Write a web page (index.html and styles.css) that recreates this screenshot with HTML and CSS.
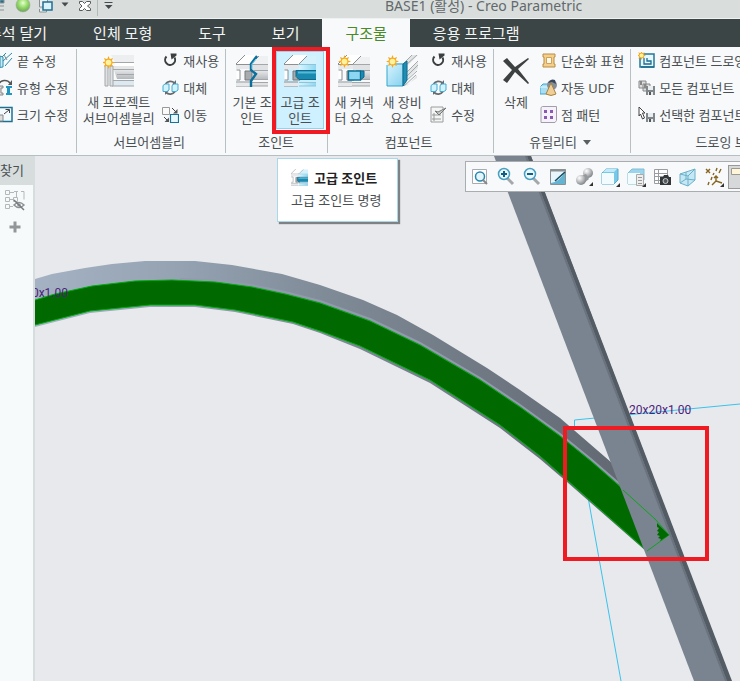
FILE: index.html
```html
<!DOCTYPE html>
<html lang="ko">
<head>
  <meta charset="UTF-8">
  <meta name="viewport" content="width=device-width, initial-scale=1.0">
  <title>BASE1 (활성) - Creo Parametric</title>
  <link rel="stylesheet" href="styles.css">
</head>
<body>
  <!-- Shared icons -->
  <svg class="defs" width="0" height="0" aria-hidden="true">
    <defs>
      <linearGradient id="g-steel" x1="0" y1="0" x2="0" y2="1">
        <stop offset="0" stop-color="#e4e6e8"/><stop offset="1" stop-color="#b4b7ba"/>
      </linearGradient>
      <linearGradient id="g-blue" x1="0" y1="0" x2="1" y2="1">
        <stop offset="0" stop-color="#d9f5ff"/><stop offset="1" stop-color="#7fcdec"/>
      </linearGradient>
      <linearGradient id="g-adv" x1="0" y1="0" x2="1" y2="0">
        <stop offset="0" stop-color="#d9f5ff"/><stop offset="1" stop-color="#8fd6f0"/>
      </linearGradient>
      <radialGradient id="g-ball" cx="0.5" cy="0.35" r="0.6">
        <stop offset="0" stop-color="#e6ffd0"/><stop offset="0.6" stop-color="#8ed860"/><stop offset="1" stop-color="#74a860"/>
      </radialGradient>
      <radialGradient id="g-grey" cx="0.35" cy="0.3" r="0.7">
        <stop offset="0" stop-color="#ffffff"/><stop offset="1" stop-color="#84888b"/>
      </radialGradient>
      <linearGradient id="g-arc" gradientUnits="userSpaceOnUse" x1="35" y1="0" x2="615" y2="0">
        <stop offset="0" stop-color="#a5b2c3"/><stop offset="0.25" stop-color="#95a2b2"/>
        <stop offset="0.5" stop-color="#7f8b97"/><stop offset="1" stop-color="#626973"/>
      </linearGradient>
    </defs>
    <symbol id="star" viewBox="0 0 12 12">
      <path d="M6 0l1.200 3.100 3-1.300-1.300 3L12 6l-3.100 1.200 1.300 3-3-1.300L6 12 4.800 8.900l-3 1.300 1.300-3L0 6l3.100-1.200-1.300-3 3 1.300z" fill="#f7a81b"/>
      <circle cx="6" cy="6" r="2.600" fill="#fff3a0"/>
    </symbol>
    <symbol id="beam-end" viewBox="0 0 32 32">
      <path d="M0 9L9 0H23L15 9z" fill="#fff"/>
      <path d="M0 9L9 0M15 9L23 1M0 9.500H15M0 27H14M0 31H14" stroke="#8c9093" fill="none"/>
      <path d="M0 10h15v4H0zM0 28h14v3H0z" fill="#e6e8e9"/>
      <path d="M0.500 15H4v10H0.500" fill="#fff" stroke="#8c9093"/>
      <path d="M9 16h7v9H9z" fill="#a8abad" stroke="#77797b"/>
    </symbol>
    <symbol id="i-sub" viewBox="0 0 32 32">
      <path d="M8 0h23v7H12z" fill="#eceeef"/><path d="M12 7h19v4H12z" fill="#fff"/>
      <path d="M7 11h24v3H7z" fill="#e4e6e7"/><path d="M11 15h20v9H14z" fill="url(#g-steel)"/>
      <path d="M7 26h24v5H7z" fill="#dce9f0"/>
      <path d="M10 7.500H31M9 14.500h22M14 19.500h17M9 25.500h22M9 31h22" stroke="#a4a7a9"/>
      <path d="M2 10h3v21H2zM7 11h3v20H7z" fill="#dfe1e2" stroke="#a4a7a9"/>
      <use href="#star" x="-1" y="1" width="13" height="13"/>
    </symbol>
    <symbol id="i-joint" viewBox="0 0 32 32">
      <path d="M22 1h10v8H15z" fill="#eef0f1"/><path d="M17 10h15v5H17z" fill="#dfe1e2"/>
      <path d="M17 16h15v9H17z" fill="url(#g-steel)"/><path d="M16 28h16v3H16z" fill="#e0e2e3"/>
      <path d="M16 9.500h16M18 15.500h14M18 24.500h14M16 27.500h16M16 31h16" stroke="#a4a7a9"/>
      <use href="#beam-end" width="32" height="32"/>
      <path d="M21 1l-6 8v6l5 4-5 7v6" fill="none" stroke="#0a6f9b" stroke-width="2.400"/>
      <path d="M20 4l-4 5v5" fill="none" stroke="#7dd0ee"/>
    </symbol>
    <symbol id="i-adv" viewBox="0 0 32 32">
      <path d="M22 1h10v9H15z" fill="#d5f1fb"/><path d="M15 10h17v5H15zM15 27h17v4H15z" fill="url(#g-adv)"/>
      <path d="M15 25h17v2H15z" fill="#c8ecf8"/>
      <use href="#beam-end" width="32" height="32"/>
      <path d="M14 9.500h18M15 27.500h17M15 31h17" stroke="#8cc5d9"/>
      <path d="M12 16h20v8H14l-2-3z" fill="#1989b0"/><path d="M14 17.500h18" stroke="#55b9d8" stroke-width="2"/>
      <path d="M32 15.500H12v6l3 3h17" fill="none" stroke="#11688a"/>
    </symbol>
    <symbol id="i-conn" viewBox="0 0 32 32">
      <path d="M18 2h14v7H15z" fill="#eef0f1"/><path d="M15 10h17v5H15z" fill="#dfe1e2"/>
      <path d="M15 16h17v9H15z" fill="url(#g-steel)"/><path d="M14 28h18v3H14z" fill="#e0e2e3"/>
      <path d="M14 9.500h18M18 15.500h14M18 24.500h14M14 27.500h18M14 31h18" stroke="#a4a7a9"/>
      <use href="#beam-end" width="32" height="32"/>
      <path d="M10.500 16h12v9h-12z" fill="#8ed7f3" stroke="#0d7399" stroke-width="1.400"/>
      <path d="M22.500 25V16H26v6z" fill="#168bb5" stroke="#0d6688"/>
      <use href="#star" x="0" y="0" width="13" height="13"/>
    </symbol>
    <symbol id="i-equip" viewBox="0 0 32 32">
      <path d="M17 9L26 0h6L22 10v6l10-9v6L21 24v7l10-11v3L19 31h-2z" fill="#e2e5e6"/>
      <path d="M17 9L26 0M20 10L31 0M21 17L32 6M21 21L32 10M20 26l11-10M18 31l12-11" stroke="#a4a9ac" fill="none"/>
      <path d="M4 8h14l3 2v13l-4 8H1V8z" fill="url(#g-blue)"/>
      <path d="M1 10v21h16V9H9" fill="none" stroke="#35a6cb"/><path d="M17 9l4-3v19l-4 6z" fill="#208db4" stroke="#0e6c8e"/>
      <use href="#star" x="0" y="0" width="13" height="13"/>
    </symbol>
    <symbol id="i-delete" viewBox="0 0 32 32">
      <path d="M3 6l4-3 8 9L28 3l1 1-11 10 11 14-1 1-13-12L7 28l-4-3 9-10z" fill="#3e4141"/>
    </symbol>
    <symbol id="i-reuse" viewBox="0 0 17 17">
      <path d="M4.500 4.500A5 5 0 1 0 12.500 5.500" fill="none" stroke="#3b3f40" stroke-width="2"/>
      <path d="M8.500 1.500H14.500v2L9.500 7.500z" fill="#3b3f40"/>
    </symbol>
    <symbol id="i-replace" viewBox="0 0 17 17">
      <path d="M3.500 5a6 6 0 0 1 9-1M13 12.500a6 6 0 0 1-9 1" fill="none" stroke="#666b6d" stroke-width="1.700"/>
      <path d="M14 1v4.500H10zM3 16v-4.500h4z" fill="#666b6d"/>
      <path d="M1 6.500l2-1.500h4v6L5 12.500H1zM10 6.500L12 5h4v6l-2 1.500h-4z" fill="#d2f2fd" stroke="#45abd0"/>
    </symbol>
    <symbol id="i-move" viewBox="0 0 17 17">
      <path d="M.500 1.500h7v7h-7z" fill="#fafafa" stroke="#999"/><path d="M8.500 8.500h8v8h-8z" fill="#e8f8fd" stroke="#187394" stroke-width="1.200"/>
      <path d="M10 2l4 4M2 11l4 4" fill="none" stroke="#444"/><path d="M15.500 3v4.500H11zM7 11.500V16H2.500z" fill="#555"/>
    </symbol>
    <symbol id="i-edit" viewBox="0 0 17 17">
      <path d="M1 1h12v15H1z" fill="#f4f5f5" stroke="#9a9d9e"/>
      <path d="M3 8h2v2H3zM3 12h2v2H3zM6 9h5M6 13h5" stroke="#999" fill="none"/>
      <path d="M5 5l3 1 8-4-7 7z" fill="#c8cbcc" stroke="#777"/>
    </symbol>
    <symbol id="i-end" viewBox="0 0 17 17">
      <path d="M0 3l7 2v10l-7 1z" fill="#c5ebf7" stroke="#2c8cac"/><path d="M4 4v11M7 9l9-8M9 14l7-8M6 5l4-4" stroke="#2c8cac" fill="none"/><path d="M8 3l3 5" stroke="#8b8f91"/>
    </symbol>
    <symbol id="i-type" viewBox="0 0 17 17">
      <path d="M3 5a6 5 0 0 1 11-1" fill="none" stroke="#555" stroke-width="1.500"/><path d="M16 1v5h-4z" fill="#555"/>
      <path d="M1 7h6v2H5v5h2v2H1v-2h1V9H1z" fill="#ddd" stroke="#888"/><path d="M10 7h6v2h-2v5h2v2h-6v-2h1V9h-1z" fill="#2197c0"/>
    </symbol>
    <symbol id="i-size" viewBox="0 0 17 17">
      <path d="M1 1.500h15v14H1z" fill="#f3fbfe" stroke="#1b7192" stroke-width="1.500"/><path d="M1 9h6v6H1z" fill="#ddd" stroke="#888"/><path d="M8 8l5-4M9.500 3.500H13.500V7" stroke="#444" fill="none"/>
    </symbol>
    <symbol id="i-simple" viewBox="0 0 17 17">
      <path d="M3 2h12v3h-1v7h1v3H3v-3h1V5H3z" fill="#f5cf8a" stroke="#b98d45"/><path d="M6.500 5.500h5v6h-5z" fill="#fff8e8" stroke="#c9a25f"/>
    </symbol>
    <symbol id="i-udf" viewBox="0 0 17 17">
      <path d="M0 8l3-3h8v8l-3 2H0z" fill="#a8def4" stroke="#3fa5ca"/><path d="M0 8h8l3-3" fill="none" stroke="#e6faff"/>
      <circle cx="12" cy="6" r="5" fill="#858e99"/><path d="M8 4q3-5 7-3l1 4-4-2z" fill="#3a4758"/>
      <path d="M11 4l5 11q-5 3-10 0z" fill="#efcf97" stroke="#a98341"/>
    </symbol>
    <symbol id="i-points" viewBox="0 0 17 17">
      <path d="M1 1.500L2.500 0.500h14v14L15 16.500H1z" fill="#f5f2fa" stroke="#a49cac"/>
      <path d="M4 4h3v3H4zM10 4h3v3h-3zM4 10h3v3H4zM10 10h3v3h-3z" fill="#8a5ab2"/>
    </symbol>
    <symbol id="i-drawing" viewBox="0 0 17 17">
      <path d="M2 2h14v13H2z" fill="#e6f7fd" stroke="#247896" stroke-width="1.500"/><path d="M6 6v6h7V9H9V6M3 15h13" fill="none" stroke="#1b6e8e" stroke-width="1.300"/>
      <use href="#star" x="-1" y="-1" width="9" height="9"/>
    </symbol>
    <symbol id="i-saveall" viewBox="0 0 17 17">
      <path d="M1 2h7v7H1zM5 5h7v7H5z" fill="#ddd" stroke="#888"/><path d="M2 2h2v4H2zM6 5h2v4H6z" fill="#888"/>
      <path d="M8 7h9v9H8z" fill="#81868a"/><path d="M10 7h5v4h-5zM10 13h5v3h-5z" fill="#e9eff1"/><path d="M11 13h2v3h-2z" fill="#555"/>
    </symbol>
    <symbol id="i-savesel" viewBox="0 0 17 17">
      <path d="M1 1l6 6H4.500l2 5-2 1-2-5L1 10z" fill="#fff" stroke="#444"/>
      <path d="M8 7h9v9H8z" fill="#81868a"/><path d="M10 7h5v4h-5zM10 13h5v3h-5z" fill="#e9eff1"/><path d="M11 13h2v3h-2z" fill="#555"/>
    </symbol>
  </svg>

  <!-- Title bar -->
  <header class="titlebar">
    <div class="quick">
      <svg width="114" height="19" viewBox="0 0 114 19">
        <path d="M0 0h4v3H0zM0 6h4M0 10h4" fill="#1f6f92" stroke="#8a9194"/>
        <circle cx="23" cy="5" r="7" fill="url(#g-ball)" stroke="#9cae98" stroke-width=".600"/>
        <path d="M39.500-1h8v8h-8zM39.500 9v3h7V9" fill="#eef1f2" stroke="#8a9194"/>
        <path d="M43 2h9v8h-9z" fill="#d9f2fb" stroke="#1f6f92" stroke-width="1.500"/>
        <path d="M61.500 2.500h7l-3.500 4zM105 5h7.500L108.700 9z" fill="#454b4d"/><path d="M104.500 2.500h8" stroke="#454b4d"/>
        <path d="M79.500 1.500h3l2 2 2-2h4v2l-3 2.500 3 2.500v2h-4l-2-2-2 2h-3v-2L82 6l-2.500-2.500z" fill="#fff" stroke="#555b5d"/>
        <path d="M97.500 0v16" stroke="#b4baba"/>
      </svg>
    </div>
    <div class="title">BASE1 (활성) - Creo Parametric</div>
  </header>

  <!-- Tabs -->
  <nav class="tabs">
    <button class="tab">주석 달기</button>
    <button class="tab">인체 모형</button>
    <button class="tab">도구</button>
    <button class="tab">보기</button>
    <button class="tab active">구조물</button>
    <button class="tab">응용 프로그램</button>
  </nav>

  <!-- Ribbon -->
  <div class="ribbon">
    <section class="group edge">
      <div class="group-body">
        <div class="stack">
          <button class="small"><svg><use href="#i-end"/></svg>끝 수정</button>
          <button class="small"><svg><use href="#i-type"/></svg>유형 수정</button>
          <button class="small"><svg><use href="#i-size"/></svg>크기 수정</button>
        </div>
      </div>
    </section>
    <section class="group">
      <div class="group-body">
        <button class="big wide"><svg><use href="#i-sub"/></svg>새 프로젝트<br>서브어셈블리</button>
        <div class="stack">
          <button class="small"><svg><use href="#i-reuse"/></svg>재사용</button>
          <button class="small"><svg><use href="#i-replace"/></svg>대체</button>
          <button class="small"><svg><use href="#i-move"/></svg>이동</button>
        </div>
      </div>
      <div class="group-label">서브어셈블리</div>
    </section>
    <section class="group joints">
      <div class="group-body">
        <button class="big"><svg><use href="#i-joint"/></svg>기본 조<br>인트</button>
        <button class="big selected"><svg><use href="#i-adv"/></svg>고급 조<br>인트<span class="mark"></span></button>
      </div>
      <div class="group-label">조인트</div>
    </section>
    <section class="group">
      <div class="group-body">
        <button class="big"><svg><use href="#i-conn"/></svg>새 커넥<br>터 요소</button>
        <button class="big"><svg><use href="#i-equip"/></svg>새 장비<br>요소</button>
        <div class="stack">
          <button class="small"><svg><use href="#i-reuse"/></svg>재사용</button>
          <button class="small"><svg><use href="#i-replace"/></svg>대체</button>
          <button class="small"><svg><use href="#i-edit"/></svg>수정</button>
        </div>
      </div>
      <div class="group-label">컴포넌트</div>
    </section>
    <section class="group">
      <div class="group-body">
        <button class="big narrow"><svg><use href="#i-delete"/></svg>삭제</button>
        <div class="stack">
          <button class="small"><svg><use href="#i-simple"/></svg>단순화 표현</button>
          <button class="small"><svg><use href="#i-udf"/></svg>자동 UDF</button>
          <button class="small"><svg><use href="#i-points"/></svg>점 패턴</button>
        </div>
      </div>
      <button class="group-label">유틸리티<span class="caret"></span></button>
    </section>
    <section class="group drawing">
      <div class="group-body">
        <div class="stack">
          <button class="small"><svg><use href="#i-drawing"/></svg>컴포넌트 드로잉</button>
          <button class="small"><svg><use href="#i-saveall"/></svg>모든 컴포넌트</button>
          <button class="small"><svg><use href="#i-savesel"/></svg>선택한 컴포넌트</button>
        </div>
      </div>
      <div class="group-label">드로잉 보기</div>
    </section>
  </div>

  <main class="workspace">
    <aside class="tree">
      <div class="tree-head">찾기</div>
      <div class="tree-body">
        <button class="tree-button" aria-label="트리 필터">
          <svg width="22" height="22" viewBox="0 0 22 22" fill="none" stroke="#b4b8ba">
            <path d="M1.500 1.500h4v4h-4zM1.500 8.500h4v4h-4zM1.500 15.500h4v4h-4zM6 3.500h4M6 10.500h3M6 17.500h3M9.500 8.500h4v4h-4zM10 2.500h4M17 2.500h3v8M12.500 3v5"/>
            <path d="M10 16q5-5 10 0-5 5-10 0z" stroke="#8d9193" stroke-width="1.500"/><circle cx="15" cy="16" r="1.500" fill="#8d9193"/><path d="M10 11l10 10" stroke="#777b7d" stroke-width="1.500"/>
          </svg>
        </button>
        <button class="tree-button" aria-label="추가">
          <svg width="22" height="22" viewBox="0 0 22 22"><path d="M5.500 11h11M11 5.500v11" stroke="#929698" stroke-width="3"/></svg>
        </button>
      </div>
    </aside>

    <div class="canvas">
      <svg class="model" viewBox="35 156 705 525" preserveAspectRatio="xMinYMin slice">
        <!-- datum lines -->
        <path d="M574.500 430V420L740 404M588 497L621 681" fill="none" stroke="#38c3ec"/>
        <!-- curved member -->
        <path d="M35 279L52 274 85 268 112 264 145 261 195 261 232 265 282 274 320 285 363 300 397 315 433 335 487 368 520 390 560 418 612 463 630 495 647 552 567 482 540 459 500 428 430 383 360 349 320 333 293 324 235 312 195 307 150 307 90 313 35 327z" fill="url(#g-arc)"/>
        <path d="M35 300L55 294 92 286 135 281 172 280 215 282 252 287 285 294 320 303 370 321 420 345 480 380 520 407 560 436 592 462 632 497 647 551 567 480 540 456 500 425 430 380 360 346 320 331 293 322 235 310 195 305 150 305 90 311 35 325z" fill="#006a00"/>
        <path d="M180 279L215 280 252 285 285 292 320 301 370 319 420 343 480 378 520 405 560 434 592 460 622 486" fill="none" stroke="#929bad" stroke-width="2"/>
        <path d="M35 300L55 294 92 286 135 281 172 280 215 282 252 287 285 294 320 303 370 321 420 345 480 380 520 407 560 436 592 462 632 497M647 551L567 480 540 456 500 425 430 380 360 346 320 331 293 322 235 310 195 305 150 305 90 311 35 325" fill="none" stroke="#00ac12"/>
        <!-- straight member -->
        <path d="M494 156H531L731 681H694z" fill="#7a8490"/>
        <path d="M527 156h4L732 681h-5z" fill="#535b64"/>
        <path d="M525 156h2L727 681h-2z" fill="#69727d"/>
        <path d="M623 490L655 519 669 535 647 551" fill="none" stroke="#0aa61a"/>
        <path d="M657 523l12 12-9 6 1-2-3-1 2-2-3-1 2-3-2-1 2-3-2-1z" fill="#006a00"/>
        <text x="629" y="414">20x20x1.00</text>
        <text x="68" y="297" text-anchor="end">20x20x1.00</text>
        <rect x="565" y="428" width="142" height="131" fill="none" stroke="#f01a22" stroke-width="4"/>
      </svg>

      <div class="tooltip" role="tooltip">
        <div class="tooltip-title"><svg><use href="#i-adv"/></svg>고급 조인트</div>
        <div>고급 조인트 명령</div>
      </div>

      <div class="viewbar">
        <button aria-label="전체 보기"><svg viewBox="0 0 20 20"><path d="M2.500 2.500h14v14h-14z" fill="#fff" stroke="#a8acae"/><circle cx="10" cy="9.500" r="4.500" fill="#e4f5fb" stroke="#2887ad" stroke-width="1.500"/><path d="M13 13l4 4" stroke="#888" stroke-width="2"/></svg></button>
        <button aria-label="확대"><svg viewBox="0 0 20 20"><path d="M11 11l6 6" stroke="#a5a8aa" stroke-width="3"/><circle cx="8" cy="7" r="5.500" fill="#e8f8fd" stroke="#4a9fc0" stroke-width="1.500"/><path d="M5 7h6M8 4v6" stroke="#125f83" stroke-width="2"/></svg></button>
        <button aria-label="축소"><svg viewBox="0 0 20 20"><path d="M11 11l6 6" stroke="#a5a8aa" stroke-width="3"/><circle cx="8" cy="7" r="5.500" fill="#e8f8fd" stroke="#4a9fc0" stroke-width="1.500"/><path d="M5 7h6" stroke="#125f83" stroke-width="2"/></svg></button>
        <button aria-label="다시 그리기"><svg viewBox="0 0 20 20"><path d="M2.500 2.500h15v15h-15z" fill="#e6f6fc" stroke="#8b9092"/><path d="M3 16Q11 15 17 5v12H3z" fill="#62b4d2"/><path d="M2 3.500h16" stroke="#8b9092" stroke-width="2"/><path d="M7 14L17 5" stroke="#174b60" stroke-width="1.500"/></svg></button>
        <button aria-label="음영"><svg viewBox="0 0 20 20"><circle cx="14" cy="6" r="5" fill="url(#g-grey)"/><path d="M5 10l7-3 3 5-5 4z" fill="#95999c"/><circle cx="7" cy="13" r="5" fill="url(#g-grey)"/><path d="M19 15v4h-4z" fill="#333"/></svg></button>
        <button aria-label="표시 스타일"><svg viewBox="0 0 20 20"><path d="M2 6l4-4h12v11l-4 4H2z" fill="#78c8e8" stroke="#5aaccc"/><path d="M2 6h12v11H2z" fill="#f2fbfe"/><path d="M3 5l3-3h11l-3 3z" fill="#c1eafa"/><path d="M20 16v4h-4z" fill="#333"/></svg></button>
        <button aria-label="뷰 관리자"><svg viewBox="0 0 20 20"><path d="M2 6l4-4h12v11l-4 4H2z" fill="#9bd5ed" stroke="#84bdd2"/><path d="M2 6h12v11H2z" fill="#f2fbfe"/><path d="M10.500 7.500h7v11h-7z" fill="#eee" stroke="#aaa"/><path d="M12 10.500h4M12 13.500h4M12 16.500h4" stroke="#999"/><path d="M20 16v4h-4z" fill="#333"/></svg></button>
        <button aria-label="캡처"><svg viewBox="0 0 20 20"><path d="M2.500 2.500h13v14h-13zM6.500 3v13M3 6.500h12M3 9.500h12M3 13.500h12" fill="#fff" stroke="#989d9f"/><path d="M8 10h3l1-2h4l1 2h2v8H8z" fill="#333739"/><circle cx="13.500" cy="14" r="2.500" fill="#555b5e" stroke="#ccc"/></svg></button>
        <button aria-label="원근"><svg viewBox="0 0 20 20"><path d="M2 7L17 2v11l-7 6-8-3z" fill="#c6e8f5" stroke="#6bb0ca"/><path d="M2 7l8 2 7-7M10 9v10M2 16l6-4 9 1M8 12V5" fill="none" stroke="#6bb0ca"/></svg></button>
        <button aria-label="데이텀 표시"><svg viewBox="0 0 20 20"><path d="M2 2l4 4M6 2L2 6M13 1l-1 3M10 6L9 8M8 10l-1 3M5 15l-1 3M17 2l-2 4M12 9v5l6 2M12 14l-4 4M10 11l2-2 2 2" stroke="#85651f" stroke-width="1.400" fill="none"/><path d="M20 16v4h-4z" fill="#333"/></svg></button>
        <button class="pressed" aria-label="주석 표시"><svg viewBox="0 0 20 20"><path d="M1.500 1.500h17v6h-17z" fill="#fff6d9" stroke="#9a9a90"/></svg></button>
      </div>
    </div>
  </main>
</body>
</html>
```
FILE: styles.css
```css
* {
  box-sizing: border-box;
}

body {
  margin: 0;
  min-height: 100vh;
  display: flex;
  flex-direction: column;
  overflow: hidden;
  font-family: "Noto Sans", "Noto Sans CJK KR", sans-serif;
  font-size: 13px;
  line-height: 16px;
  color: #4a4f52;
  background: #e8e9ed;
}

button {
  margin: 0;
  padding: 0;
  border: 0;
  background: none;
  font: inherit;
  color: inherit;
  white-space: nowrap;
}

svg {
  display: block;
  flex: none;
}

.defs {
  position: absolute;
}

/* title bar */
.titlebar {
  display: flex;
  height: 19px;
  overflow: hidden;
  background: #d9dedd;
  border-bottom: 1px solid #eef1f1;
}

.quick {
  width: 385px;
}

.title {
  font-size: 14px;
  line-height: 12px;
  white-space: nowrap;
  color: #63696b;
}

/* tabs, scrolled a little to the right */
.tabs {
  display: flex;
  height: 28px;
  overflow: hidden;
  background: #3c4545;
}

.tab {
  flex: none;
  padding: 0 23px;
  font-size: 15px;
  color: #f4f6f6;
}

.tab:first-child {
  margin-left: -35px;
}

.tab.active {
  background: #f7f9fb;
  color: #4a8a28;
}

/* ribbon */
.ribbon {
  display: flex;
  height: 109px;
  overflow: hidden;
  background: #f7f9fb;
  border-bottom: 1px solid #b5bec1;
}

.group {
  flex: none;
  display: flex;
  flex-direction: column;
  margin: 2px 0;
  padding: 0 6px 0 2px;
  border-right: 1px solid #b9c0c3;
}

.group.edge {
  margin-left: -4px;
  padding: 0 8px 0 0;
}

.group.joints {
  padding-right: 3px;
}

.group.drawing {
  width: 192px;
  padding-left: 7px;
}

.group-body {
  display: flex;
  height: 82px;
}

.stack {
  display: flex;
  flex-direction: column;
  margin-top: -2px;
}

.big + .stack {
  margin-left: 4px;
}

.small {
  display: flex;
  align-items: center;
  gap: 4px;
  height: 27px;
}

.small svg {
  width: 17px;
  height: 17px;
}

.big {
  position: relative;
  display: block;
  width: 48px;
  height: 78px;
  margin-top: 2px;
  border: 1px solid transparent;
  text-align: center;
}

.big svg {
  width: 32px;
  height: 32px;
  margin: 0 auto 7px;
}

.big.wide {
  width: 79px;
}

.big.narrow {
  width: 40px;
  padding-bottom: 16px;
}

.big.selected {
  background: #cff0fe;
  border-color: #8fd5f2;
}

/* red frame round the selected command */
.mark {
  position: absolute;
  inset: -5px -7px -6px -5px;
  border: 4px solid #f01a22;
}

.group-label {
  display: flex;
  align-items: center;
  justify-content: center;
  gap: 6px;
  height: 22px;
}

.caret {
  border: 4px solid transparent;
  border-top: 5px solid #5a6062;
  border-bottom: 0;
}

/* workspace */
.workspace {
  flex: 1;
  display: flex;
}

.tree {
  flex: none;
  width: 35px;
  display: flex;
  flex-direction: column;
  background: #f7fafb;
}

.tree-head {
  height: 29px;
  line-height: 29px;
  background: #d6dddc;
}

.tree-body {
  flex: 1;
  display: flex;
  flex-direction: column;
  gap: 5px;
  padding: 4px;
  border-right: 2px solid #d6dddc;
}

.canvas {
  position: relative;
  flex: 1;
  overflow: hidden;
}

.model {
  position: absolute;
  width: 100%;
  height: 100%;
}

.model text {
  font: 12px Roboto, sans-serif;
  fill: #4b2379;
}

.tooltip {
  position: absolute;
  left: 242px;
  top: 2px;
  padding: 10px 16px 13px 13px;
  background: #fff;
  border: 1px solid #a9d7ec;
  box-shadow: 2px 2px 1px #7d8285;
  white-space: nowrap;
}

.tooltip-title {
  display: flex;
  align-items: center;
  gap: 6px;
  margin-bottom: 6px;
  font-weight: bold;
  color: #222;
}

.tooltip-title svg {
  width: 17px;
  height: 17px;
}

.viewbar {
  position: absolute;
  left: 430px;
  right: 0;
  top: 5px;
  display: flex;
  align-items: center;
  gap: 6px;
  height: 31px;
  padding-left: 4px;
  overflow: hidden;
  background: #f7f9fb;
  border: 1px solid #a9adaf;
  border-right: 0;
}

.viewbar svg {
  width: 20px;
  height: 20px;
}

.viewbar .pressed {
  margin-left: -2px;
  padding: 1px;
  background: #d6d8d9;
  border: 1px solid #999;
}
```
